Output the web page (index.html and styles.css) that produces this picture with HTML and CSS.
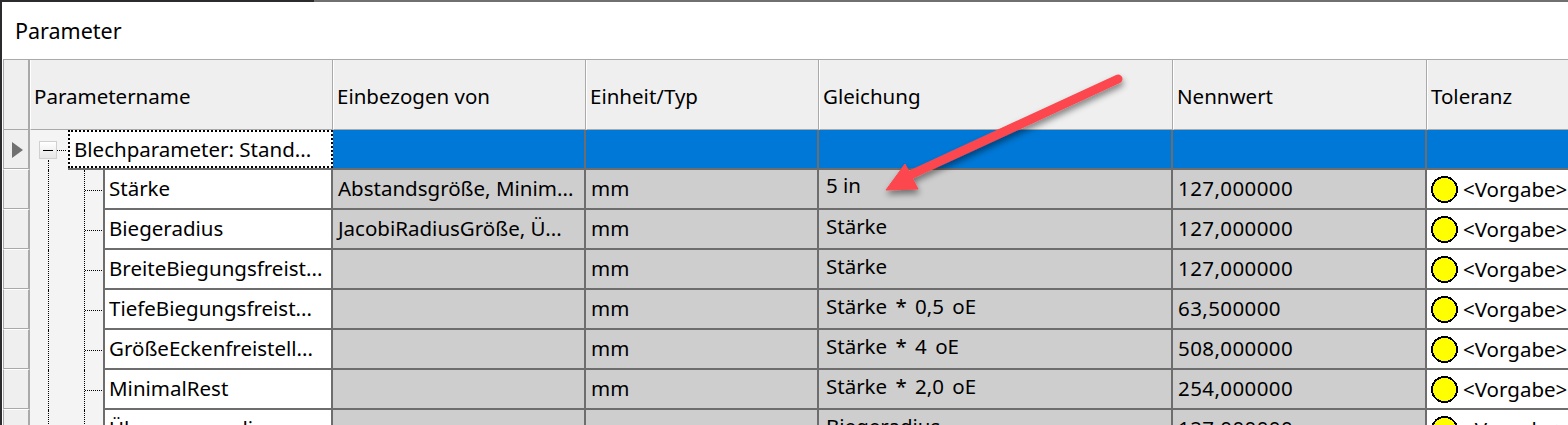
FILE: index.html
```html
<!DOCTYPE html>
<html lang="de">
<head>
  <meta charset="UTF-8" />
  <title>Parameter</title>
  <link rel="stylesheet" href="styles.css">
</head>
<body>
  <svg class="defs" width="0" height="0">
    <symbol id="dot" viewBox="0 0 27 27">
      <circle cx="13.5" cy="13.5" r="12.5" fill="#ff0" stroke="#000" stroke-width="2" shape-rendering="crispEdges" />
    </symbol>
  </svg>
  <div class="topbar"></div>
  <div class="window">
    <div class="title">Parameter</div>
    <div class="grid">
      <div class="row head">
        <div class="gutter"></div>
        <div class="cell">Parametername</div>
        <div class="cell">Einbezogen von</div>
        <div class="cell">Einheit/Typ</div>
        <div class="cell">Gleichung</div>
        <div class="cell">Nennwert</div>
        <div class="cell">Toleranz</div>
      </div>

      <div class="row group">
        <div class="gutter"><span class="marker"></span></div>
        <div class="namecol">
          <div class="tree"><span class="toggle"></span></div>
          <div class="name">Blechparameter: Stand...</div>
        </div>
        <div class="cell"></div>
        <div class="cell"></div>
        <div class="cell"></div>
        <div class="cell"></div>
        <div class="cell tol"></div>
      </div>

      <div class="row">
        <div class="gutter"></div>
        <div class="namecol"><div class="tree"></div><div class="name">Stärke</div></div>
        <div class="cell">Abstandsgröße, Minim...</div>
        <div class="cell">mm</div>
        <div class="cell eq eq-first">5 in</div>
        <div class="cell num">127,000000</div>
        <div class="cell tol"><svg class="dot"><use href="#dot" /></svg>&lt;Vorgabe&gt;</div>
      </div>
      <div class="row">
        <div class="gutter"></div>
        <div class="namecol"><div class="tree"></div><div class="name">Biegeradius</div></div>
        <div class="cell">JacobiRadiusGröße, Ü...</div>
        <div class="cell">mm</div>
        <div class="cell eq">Stärke</div>
        <div class="cell num">127,000000</div>
        <div class="cell tol"><svg class="dot"><use href="#dot" /></svg>&lt;Vorgabe&gt;</div>
      </div>
      <div class="row">
        <div class="gutter"></div>
        <div class="namecol"><div class="tree"></div><div class="name">BreiteBiegungsfreist...</div></div>
        <div class="cell"></div>
        <div class="cell">mm</div>
        <div class="cell eq">Stärke</div>
        <div class="cell num">127,000000</div>
        <div class="cell tol"><svg class="dot"><use href="#dot" /></svg>&lt;Vorgabe&gt;</div>
      </div>
      <div class="row">
        <div class="gutter"></div>
        <div class="namecol"><div class="tree"></div><div class="name">TiefeBiegungsfreist...</div></div>
        <div class="cell"></div>
        <div class="cell">mm</div>
        <div class="cell eq">Stärke * 0,5 oE</div>
        <div class="cell num">63,500000</div>
        <div class="cell tol"><svg class="dot"><use href="#dot" /></svg>&lt;Vorgabe&gt;</div>
      </div>
      <div class="row">
        <div class="gutter"></div>
        <div class="namecol"><div class="tree"></div><div class="name">GrößeEckenfreistell...</div></div>
        <div class="cell"></div>
        <div class="cell">mm</div>
        <div class="cell eq">Stärke * 4 oE</div>
        <div class="cell num">508,000000</div>
        <div class="cell tol"><svg class="dot"><use href="#dot" /></svg>&lt;Vorgabe&gt;</div>
      </div>
      <div class="row">
        <div class="gutter"></div>
        <div class="namecol"><div class="tree"></div><div class="name">MinimalRest</div></div>
        <div class="cell"></div>
        <div class="cell">mm</div>
        <div class="cell eq">Stärke * 2,0 oE</div>
        <div class="cell num">254,000000</div>
        <div class="cell tol"><svg class="dot"><use href="#dot" /></svg>&lt;Vorgabe&gt;</div>
      </div>
      <div class="row">
        <div class="gutter"></div>
        <div class="namecol"><div class="tree"></div><div class="name">Übergangsradius</div></div>
        <div class="cell"></div>
        <div class="cell">mm</div>
        <div class="cell eq">Biegeradius</div>
        <div class="cell num">127,000000</div>
        <div class="cell tol"><svg class="dot"><use href="#dot" /></svg>&lt;Vorgabe&gt;</div>
      </div>
    </div>
  </div>

  <!-- red annotation arrow drawn over the grid -->
  <svg class="arrow" width="1568" height="425" viewBox="0 0 1568 425">
    <defs>
      <filter id="arrow-shadow" x="-20%" y="-20%" width="140%" height="140%">
        <feDropShadow dx="1" dy="4" stdDeviation="3" flood-color="#000" flood-opacity="0.45" />
      </filter>
    </defs>
    <g filter="url(#arrow-shadow)" fill="#fb474e" stroke="#fb474e">
      <path d="M1118 79 L908 176" stroke-width="9" stroke-linecap="round" fill="none" />
      <path d="M886 190 L905 164 L918 189 Z" stroke-width="1" />
    </g>
  </svg>
</body>
</html>
```

FILE: styles.css
```css
html, body {
  margin: 0;
  height: 100%;
  overflow: hidden;
}
body {
  background: #fff;
  color: #000;
  font-family: "Noto Sans", "Open Sans", sans-serif;
  font-size: 20.5px;
}
.defs {
  position: absolute;
}
.topbar {
  height: 2px;
  background: linear-gradient(to right, #2b2b2e 314px, #707070 314px);
}
.window {
  height: 423px;
  overflow: hidden;
  box-sizing: border-box;
  border-left: 2px solid #2b2b2e;
  padding-left: 1px;
}
.title {
  height: 57px;
  line-height: 58px;
  padding-left: 12px;
  font-size: 21.5px;
  box-sizing: border-box;
}
.grid {
  border-top: 1px solid #a9a9a9;
  width: 1600px;
}
.row {
  display: grid;
  grid-template-columns: 27px 303px 253px 233px 354px 254px 176px;
  height: 40px;
}
.gutter {
  background: #efefef;
  border-left: 1px solid #a9a9a9;
  border-right: 2px solid #a9a9a9;
  border-bottom: 1px solid #fff;
  box-shadow: inset 0 -1px 0 #a9a9a9;
  display: flex;
  align-items: center;
  justify-content: center;
}
.cell {
  background: #cecece;
  border-right: 2px solid #6d6d6d;
  border-bottom: 2px solid #6d6d6d;
  padding-left: 5px;
  line-height: 37px;
  white-space: nowrap;
  overflow: hidden;
}
.num {
  letter-spacing: 0.4px;
}
.eq {
  line-height: 32px;
  padding-left: 7px;
  word-spacing: 3px;
}
.eq-first {
  line-height: 30px;
  word-spacing: 0;
}
.tol {
  background: #fff;
  display: flex;
  align-items: center;
  gap: 5px;
  padding-left: 4px;
  line-height: 1;
}
.dot {
  width: 27px;
  height: 27px;
  flex: none;
}

/* header */
.head {
  height: 70px;
}
.head .gutter {
  box-shadow: none;
  border-bottom: 1px solid #a9a9a9;
}
.head .cell {
  background: #efefef;
  border-right: 1px solid #a9a9a9;
  border-left: 1px solid #fff;
  border-bottom: 1px solid #a9a9a9;
  line-height: 72px;
  padding-left: 3px;
}

/* selected group row */
.group .cell,
.group .tol {
  background: #0078d7;
}
.marker {
  border-left: 11px solid #707070;
  border-top: 8px solid transparent;
  border-bottom: 8px solid transparent;
  margin-left: 2px;
}
.namecol {
  display: flex;
  min-width: 0;
}
.tree {
  width: 73px;
  flex: none;
  background: #f4f4f4;
  position: relative;
}
.tree::before {
  content: "";
  position: absolute;
  left: 18px;
  top: 0;
  bottom: 0;
  border-left: 1px dotted #000;
}
.tree::after {
  content: "";
  position: absolute;
  left: 54px;
  top: 0;
  bottom: 0;
  width: 17px;
  border-left: 1px dotted #000;
  background: repeating-linear-gradient(to right, #000 0 1px, transparent 1px 2px) 0 20px / 100% 1px no-repeat;
}
.name {
  flex: 1;
  min-width: 0;
  box-sizing: border-box;
  background: #fff;
  border-left: 2px solid #6d6d6d;
  border-right: 2px solid #6d6d6d;
  border-bottom: 2px solid #6d6d6d;
  padding-left: 4px;
  line-height: 37px;
  white-space: nowrap;
  overflow: hidden;
}

/* group row has a shorter tree part and a focus frame */
.group .tree {
  width: 38px;
}
.group .tree::before {
  top: 30px;
}
.group .tree::after {
  left: 27px;
  width: 10px;
  border-left: 0;
}
.group .name {
  border: 2px dotted #000;
  box-shadow: 0 2px 0 #6d6d6d;
  height: 38px;
  padding-left: 4px;
  line-height: 35px;
}
.toggle {
  position: absolute;
  left: 9px;
  top: 11px;
  width: 16px;
  height: 16px;
  border: 1px solid #d0d0d0;
  background: linear-gradient(#fff, #e6e6e6);
  z-index: 1;
}
.toggle::before {
  content: "";
  position: absolute;
  left: 3px;
  right: 3px;
  top: 8px;
  border-top: 1px solid #000;
}
.arrow {
  position: absolute;
  left: 0;
  top: 0;
}
```
